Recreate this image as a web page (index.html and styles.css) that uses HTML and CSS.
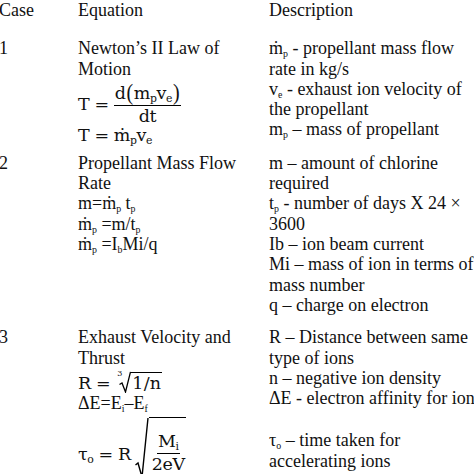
FILE: index.html
```html
<!DOCTYPE html>
<html>
<head>
<meta charset="utf-8">
<link rel="stylesheet" href="styles.css">
</head>
<body>
<div class="table">
  <div class="row head">
    <div class="c1 ln">Case</div>
    <div class="c2 ln">Equation</div>
    <div class="c3 ln">Description</div>
  </div>

  <div class="row">
    <div class="c1 ln">1</div>
    <div class="c2">
      <div class="ln">Newton’s II Law of</div>
      <div class="ln">Motion</div>
      <div class="math frac-line">
        <span>T =</span>
        <span class="frac">
          <span class="num">d<span class="paren">(</span>m<sub>p</sub>v<sub>e</sub><span class="paren">)</span></span>
          <span class="den">dt</span>
        </span>
      </div>
      <div class="math mline">T = ṁ<sub>p</sub>v<sub>e</sub></div>
    </div>
    <div class="c3">
      <div class="ln">ṁ<sub class="s">p</sub> - propellant mass flow</div>
      <div class="ln">rate in kg/s</div>
      <div class="ln">v<sub class="s">e</sub> - exhaust ion velocity of</div>
      <div class="ln">the propellant</div>
      <div class="ln">m<sub class="s">p</sub> – mass of propellant</div>
    </div>
  </div>

  <div class="row r2">
    <div class="c1 ln">2</div>
    <div class="c2">
      <div class="ln">Propellant Mass Flow</div>
      <div class="ln">Rate</div>
      <div class="ln">m=ṁ<sub class="s">p</sub> t<sub class="s">p</sub></div>
      <div class="ln">ṁ<sub class="s">p</sub> =m/t<sub class="s">p</sub></div>
      <div class="ln">ṁ<sub class="s">p</sub> =I<sub class="s">b</sub>Mi/q</div>
    </div>
    <div class="c3">
      <div class="ln">m – amount of chlorine</div>
      <div class="ln">required</div>
      <div class="ln">t<sub class="s">p</sub> - number of days X 24 ×</div>
      <div class="ln">3600</div>
      <div class="ln">Ib – ion beam current</div>
      <div class="ln">Mi – mass of ion in terms of</div>
      <div class="ln">mass number</div>
      <div class="ln">q – charge on electron</div>
    </div>
  </div>

  <div class="row r3">
    <div class="c1 ln">3</div>
    <div class="c2">
      <div class="ln">Exhaust Velocity and</div>
      <div class="ln">Thrust</div>
      <div class="math root-line">
        <span>R =</span>
        <span class="root">
          <span class="idx">3</span>
          <svg class="radsign" width="12" height="22" viewBox="0 0 12 22"><path d="M0.5 13.5 L3 12 L6.5 21 L11.5 0.8" fill="none" stroke="#000" stroke-width="1.3"/></svg>
          <span class="radicand">1/n</span>
        </span>
      </div>
      <div class="ln">ΔE=E<sub class="s">i</sub>–E<sub class="s">f</sub></div>
      <div class="math tau-line">
        <span class="tau-lhs">τ<sub>o</sub> = R</span>
        <span class="bigroot">
          <svg class="bigsign" width="14" height="62" viewBox="0 0 14 62"><path d="M0.5 48 L3 46 L7 60 L13 1" fill="none" stroke="#000" stroke-width="1.4"/></svg>
          <span class="bigrad">
            <span class="frac">
              <span class="num">M<sub>i</sub></span>
              <span class="den">2eV</span>
            </span>
          </span>
        </span>
      </div>
    </div>
    <div class="c3">
      <div class="ln">R – Distance between same</div>
      <div class="ln">type of ions</div>
      <div class="ln">n – negative ion density</div>
      <div class="ln">ΔE - electron affinity for ions</div>
      <div class="ln tau-desc">τ<sub class="s">o</sub> – time taken for</div>
      <div class="ln">accelerating ions</div>
    </div>
  </div>
</div>
</body>
</html>
```

FILE: styles.css
```css
html, body {
  margin: 0;
  padding: 0;
  background: #fff;
}
body {
  width: 474px;
  height: 474px;
  overflow: hidden;
  font-family: "Liberation Serif", "Times New Roman", serif;
  font-size: 18px;
  line-height: 20.3px;
  color: #111;
}
.table {
  display: flex;
  flex-direction: column;
}
.row {
  display: grid;
  grid-template-columns: 78px 191px 1fr;
  margin-bottom: 8px;
}
.row.head {
  margin-bottom: 18px;
}
.row.r2 {
  margin-bottom: 12px;
}
.ln {
  white-space: nowrap;
}
.c1 {
  margin-left: -1px;
}
sub {
  font-size: 62%;
  line-height: 0;
  vertical-align: -3px;
}
sub.s {
  font-size: 55%;
  vertical-align: -3px;
}
.math {
  font-family: "DejaVu Serif", serif;
  font-size: 17.5px;
  white-space: nowrap;
  letter-spacing: -0.4px;
}
.frac-line {
  display: flex;
  align-items: center;
  gap: 5px;
  height: 46px;
  margin-top: 2px;
}
.frac {
  display: inline-flex;
  flex-direction: column;
  align-items: center;
}
.frac .num {
  line-height: 21px;
  padding: 0 1px 1px;
  border-bottom: 1.3px solid #000;
}
.frac .den {
  line-height: 20px;
}
.paren {
  display: inline-block;
  font-family: "Liberation Serif", serif;
  font-size: 20px;
  transform: scaleY(1.15);
  margin: 0 1px;
}
.mline {
  line-height: 20px;
  margin-top: -2px;
}
.root-line {
  display: flex;
  align-items: flex-end;
  gap: 5px;
  height: 25px;
  line-height: 20px;
}
.root {
  display: inline-flex;
  align-items: flex-end;
  position: relative;
  padding-left: 4px;
}
.root .idx {
  position: absolute;
  left: 2px;
  top: -1px;
  font-size: 8px;
  line-height: 8px;
}
.radsign {
  display: block;
}
.radicand {
  border-top: 1.3px solid #000;
  line-height: 20px;
  padding: 0 1px;
  letter-spacing: 0.3px;
}
.tau-line {
  display: flex;
  align-items: flex-start;
  gap: 6px;
  margin-top: 4px;
  height: 62px;
}
.tau-lhs {
  line-height: 20px;
  margin-top: 27px;
}
.bigroot {
  display: inline-flex;
  align-items: flex-start;
  margin-left: -2px;
}
.bigsign {
  display: block;
}
.bigrad {
  border-top: 1.4px solid #000;
  padding: 13px 1px 0 3px;
}
.tau-desc {
  margin-top: 22px;
}
```
